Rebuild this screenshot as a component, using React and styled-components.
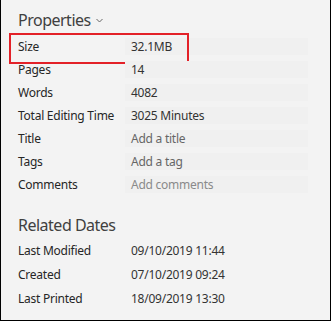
import React from "react";
import styled, { createGlobalStyle } from "styled-components";

const Global = createGlobalStyle`
  html, body { margin: 0; padding: 0; background: #f3f3f3; }
  * { box-sizing: border-box; }
`;

const Panel = styled.div`
  width: 331px;
  height: 321px;
  background: #f3f3f3;
  border-left: 1px solid #000;
  border-right: 1px solid #000;
  border-bottom: 1px solid #000;
  padding: 7px 0 0 17px;
  font-family: "Noto Sans", "Segoe UI", sans-serif;
  color: #262626;
  display: flex;
  flex-direction: column;
`;

const Heading = styled.div`
  font-size: 16px;
  letter-spacing: -0.5px;
  color: #404040;
  height: 26px;
  line-height: 24px;
  display: flex;
  align-items: center;
  gap: 5px;
`;

const Chevron = styled.svg`
  width: 7px;
  height: 5px;
  margin-top: 1px;
`;

const Rows = styled.div`
  display: flex;
  flex-direction: column;
  margin-top: ${(p) => p.$top || 0}px;
`;

const Row = styled.div`
  position: relative;
  display: grid;
  grid-template-columns: 107px 183px;
  align-items: center;
  height: ${(p) => p.$h || 23}px;
  font-size: 12px;
  letter-spacing: -0.25px;

  ${(p) =>
    p.$highlight &&
    `
    &::after {
      content: "";
      position: absolute;
      left: -9px;
      top: -2px;
      width: 176px;
      height: 27px;
      border: 2px solid #e32128;
      pointer-events: none;
    }
  `}
`;

const Label = styled.div`
  color: #262626;
  white-space: nowrap;
`;

const Value = styled.div`
  height: 17px;
  line-height: 17px;
  padding-left: 6px;
  background: ${(p) => (p.$boxed ? "#f0f0f0" : "transparent")};
  color: ${(p) => p.$color || "#333"};
  white-space: nowrap;
`;

const Section = styled.div`
  font-size: 16px;
  letter-spacing: -0.5px;
  color: #404040;
  margin-top: 17px;
  height: 24px;
  line-height: 24px;
`;

const props = [
  { label: "Size", value: "32.1MB", highlight: true },
  { label: "Pages", value: "14" },
  { label: "Words", value: "4082" },
  { label: "Total Editing Time", value: "3025 Minutes" },
  { label: "Title", value: "Add a title", color: "#666" },
  { label: "Tags", value: "Add a tag", color: "#666" },
  { label: "Comments", value: "Add comments", color: "#8a8a8a" },
];

const dates = [
  { label: "Last Modified", value: "09/10/2019 11:44" },
  { label: "Created", value: "07/10/2019 09:24" },
  { label: "Last Printed", value: "18/09/2019 13:30" },
];

export default function App() {
  return (
    <>
      <Global />
      <Panel>
        <Heading>
          Properties
          <Chevron viewBox="0 0 7 5">
            <path d="M0.5 1 L3.5 4 L6.5 1" fill="none" stroke="#666" strokeWidth="1" />
          </Chevron>
        </Heading>
        <Rows $top={2}>
          {props.map((r) => (
            <Row key={r.label} $highlight={r.highlight}>
              <Label>{r.label}</Label>
              <Value $boxed $color={r.color}>{r.value}</Value>
            </Row>
          ))}
        </Rows>
        <Section>Related Dates</Section>
        <Rows $top={1}>
          {dates.map((r) => (
            <Row key={r.label} $h={24}>
              <Label>{r.label}</Label>
              <Value $color="#333">{r.value}</Value>
            </Row>
          ))}
        </Rows>
      </Panel>
    </>
  );
}
